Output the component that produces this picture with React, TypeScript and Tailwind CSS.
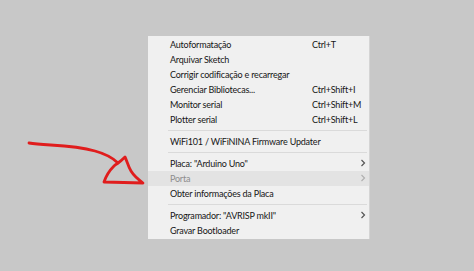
import React from "react";

type Item =
  | { kind: "item"; label: string; shortcut?: string; sub?: boolean; disabled?: boolean; hover?: boolean }
  | { kind: "sep" };

const items: Item[] = [
  { kind: "item", label: "Autoformatação", shortcut: "Ctrl+T" },
  { kind: "item", label: "Arquivar Sketch" },
  { kind: "item", label: "Corrigir codificação e recarregar" },
  { kind: "item", label: "Gerenciar Bibliotecas...", shortcut: "Ctrl+Shift+I" },
  { kind: "item", label: "Monitor serial", shortcut: "Ctrl+Shift+M" },
  { kind: "item", label: "Plotter serial", shortcut: "Ctrl+Shift+L" },
  { kind: "sep" },
  { kind: "item", label: "WiFi101 / WiFiNINA Firmware Updater" },
  { kind: "sep" },
  { kind: "item", label: 'Placa: "Arduino Uno"', sub: true },
  { kind: "item", label: "Porta", sub: true, disabled: true, hover: true },
  { kind: "item", label: "Obter informações da Placa" },
  { kind: "sep" },
  { kind: "item", label: 'Programador: "AVRISP mkII"', sub: true },
  { kind: "item", label: "Gravar Bootloader" },
];

function Chevron({ disabled }: { disabled?: boolean }) {
  return (
    <svg width="6" height="8" viewBox="0 0 6 8" className="absolute right-[3px] top-[3px]">
      <path d="M1.5 1 L4.5 4 L1.5 7" fill="none" stroke={disabled ? "#b0b0b0" : "#555"} strokeWidth="1.2" />
    </svg>
  );
}

export default function App() {
  return (
    <div className="relative w-[474px] h-[271px] bg-[#c8c8c8] overflow-hidden pt-[36px] pl-[148px]">
      <div
        className="w-[222px] bg-[#f0f0f0] border-r border-[#d4d4d4] py-[1px] text-[#161616]"
        style={{ fontFamily: 'Lato, "Noto Sans", sans-serif' }}
      >
        {items.map((it, i) =>
          it.kind === "sep" ? (
            <div key={i} className="h-[7px] flex items-center pl-[20px] pr-[2px]">
              <div className="h-px w-full bg-[#dadada]" />
            </div>
          ) : (
            <div
              key={i}
              className={`relative h-[15px] flex items-center pl-[22px] text-[9px] tracking-[-0.2px] leading-none ${
                it.hover ? "bg-[#e3e3e3]" : ""
              } ${it.disabled ? "text-[#8d8d8d]" : ""}`}
            >
              <span className="w-[142px] whitespace-nowrap">{it.label}</span>
              {it.shortcut && <span className="whitespace-nowrap">{it.shortcut}</span>}
              {it.sub && <Chevron disabled={it.disabled} />}
            </div>
          )
        )}
      </div>
      <svg
        className="absolute left-0 top-0 pointer-events-none"
        width="474"
        height="271"
        viewBox="0 0 474 271"
      >
        <path
          d="M29 143 C45 146 70 144 95 151 C106 154 113 158 118 163"
          fill="none"
          stroke="#e01d1d"
          strokeWidth="2.8"
          strokeLinecap="round"
        />
        <path
          d="M118 163 C121 161 123 159 125 157 C127 161 128 166 131 171 C134 176 139 180 143 183 L104 182 C106 176 110 170 114 166 C116 164 117 164 118 163"
          fill="none"
          stroke="#e01d1d"
          strokeWidth="2.8"
          strokeLinejoin="round"
          strokeLinecap="round"
        />
      </svg>
    </div>
  );
}
